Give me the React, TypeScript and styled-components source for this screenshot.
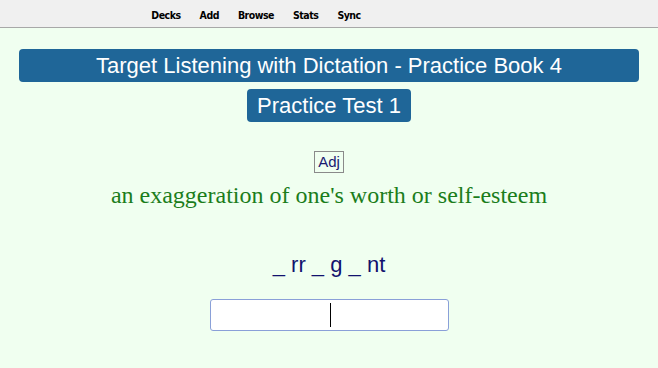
import React from "react";
import styled, { createGlobalStyle } from "styled-components";

const GlobalStyle = createGlobalStyle`
	html, body {
		margin: 0;
		padding: 0;
		background: #f0fff0;
	}
	body {
		font-family: "Liberation Sans", Arial, sans-serif;
	}
`;

const links = ["Decks", "Add", "Browse", "Stats", "Sync"];

export default function App() {
	return (
		<>
			<GlobalStyle />
			<Toolbar>
				{links.map((l) => (
					<NavLink key={l}>{l}</NavLink>
				))}
			</Toolbar>
			<Card>
				<Banner>Target Listening with Dictation - Practice Book 4</Banner>
				<Banner small>Practice Test 1</Banner>
				<Pos>Adj</Pos>
				<Definition>an exaggeration of one's worth or self-esteem</Definition>
				<Hint>_ rr _ g _ nt</Hint>
				<AnswerWrap>
					<Answer type="text" />
					<Caret />
				</AnswerWrap>
			</Card>
		</>
	);
}

const Toolbar = styled.nav`
	height: 28px;
	box-sizing: border-box;
	background: #f0f0f0;
	border-bottom: 1px solid #a8a8a8;
	display: flex;
	align-items: center;
	justify-content: center;
	gap: 19px;
	padding-right: 146px;
	padding-top: 2px;
`;

const NavLink = styled.span`
	font-family: "DejaVu Sans Condensed", "Liberation Sans", sans-serif;
	font-weight: bold;
	font-size: 10.5px;
	letter-spacing: -0.5px;
	color: #000;
`;

const Card = styled.div`
	display: flex;
	flex-direction: column;
	align-items: center;
	padding: 21px 19px 0;
`;

const Banner = styled.div<{ small?: boolean }>`
	align-self: ${(p) => (p.small ? "center" : "stretch")};
	background: #1f6698;
	color: #fff;
	border-radius: 4px;
	font-size: 22px;
	line-height: 33px;
	height: 33px;
	text-align: center;
	padding: 0 10px;
	margin-bottom: 7px;
`;

const Pos = styled.div`
	margin-top: 22px;
	border: 1px solid #8a8a8a;
	padding: 0 3px;
	height: 20px;
	line-height: 20px;
	font-size: 15px;
	color: #1a1a70;
`;

const Definition = styled.div`
	margin-top: 8px;
	font-family: "Liberation Serif", "Times New Roman", serif;
	font-size: 24px;
	line-height: 28px;
	color: #1b7d1b;
`;

const Hint = styled.div`
	margin-top: 43px;
	font-size: 22px;
	line-height: 26px;
	color: #12126e;
`;

const AnswerWrap = styled.div`
	position: relative;
	margin-top: 21px;
`;

const Answer = styled.input`
	display: block;
	width: 239px;
	height: 32px;
	box-sizing: border-box;
	border: 1px solid #8aa0d8;
	border-radius: 3px;
	background: #fff;
	text-align: center;
	font-size: 18px;
	outline: none;
`;

const Caret = styled.span`
	position: absolute;
	left: 120px;
	top: 4px;
	width: 1px;
	height: 24px;
	background: #000;
	pointer-events: none;
`;
